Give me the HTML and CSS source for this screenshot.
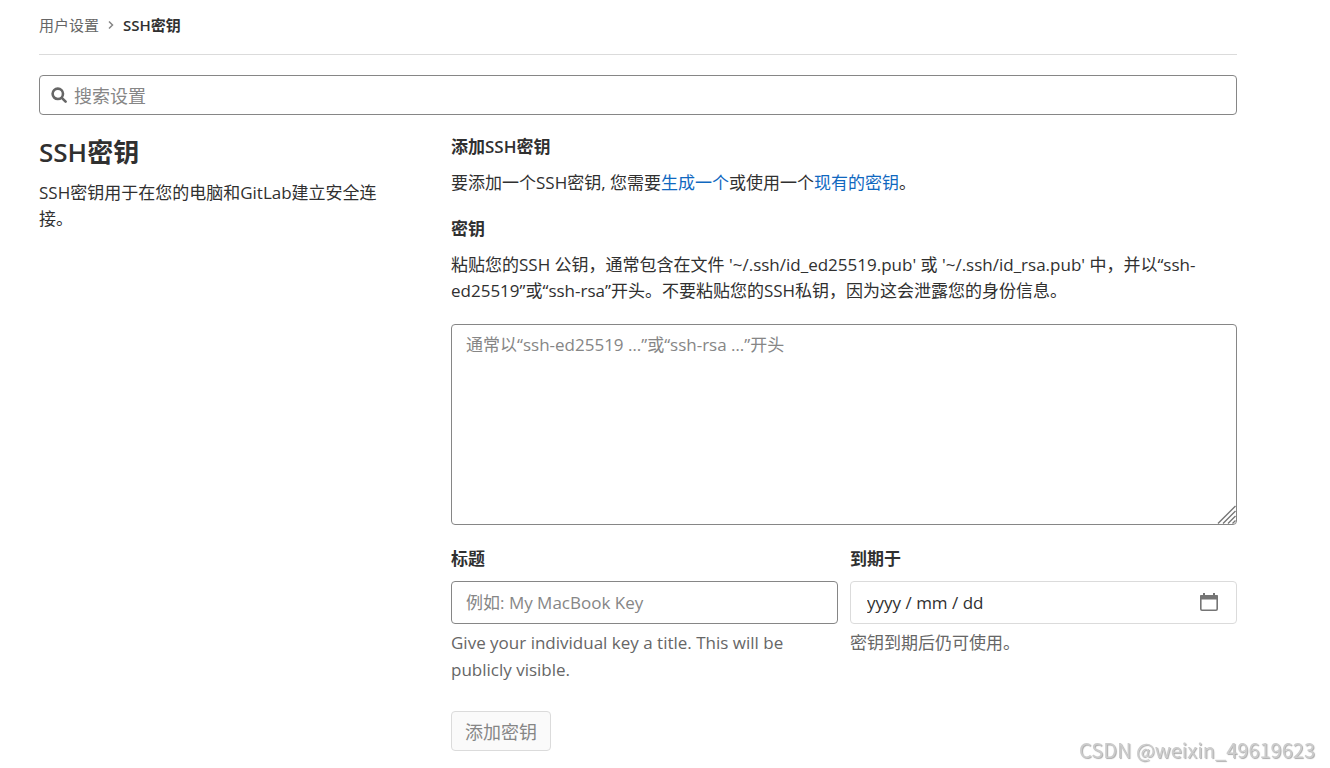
FILE: index.html
```html
<!DOCTYPE html>
<html lang="zh-CN">
<head>
    <meta charset="UTF-8">
    <meta name="viewport" content="width=device-width, initial-scale=1.0">
    <title>SSH密钥</title>
    <link rel="stylesheet" href="styles.css">
</head>
<body>
    <div class="container">
        <nav class="breadcrumbs">
            <a href="#">用户设置</a>
            <svg class="chevron" viewBox="0 0 10 10" aria-hidden="true"><path d="M3 1.5 6.5 5 3 8.5"/></svg>
            <a class="current" href="#">SSH密钥</a>
        </nav>

        <div class="search">
            <svg class="search-icon" viewBox="0 0 16 16" aria-hidden="true"><circle cx="6.8" cy="6.8" r="5.2"/><path d="M10.8 10.8 14.6 14.6"/></svg>
            <input type="search" placeholder="搜索设置" aria-label="搜索设置">
        </div>

        <main class="row">
            <section class="intro">
                <h1>SSH密钥</h1>
                <p>SSH密钥用于在您的电脑和GitLab建立安全连接。</p>
            </section>

            <section class="content">
                <h2>添加SSH密钥</h2>
                <p class="lead">要添加一个SSH密钥, 您需要<a href="#">生成一个</a>或使用一个<a href="#">现有的密钥</a>。</p>

                <form>
                    <label for="key">密钥</label>
                    <p class="key-help">粘贴您的SSH 公钥，通常包含在文件 '~/.ssh/id_ed25519.pub' 或 '~/.ssh/id_rsa.pub' 中，并以“ssh-ed25519”或“ssh-rsa”开头。不要粘贴您的SSH私钥，因为这会泄露您的身份信息。</p>
                    <textarea id="key" placeholder="通常以“ssh-ed25519 …”或“ssh-rsa …”开头"></textarea>

                    <div class="fields">
                        <div class="field">
                            <label for="title">标题</label>
                            <input class="text-input" id="title" type="text" placeholder="例如: My MacBook Key">
                            <p class="help">Give your individual key a title. This will be publicly visible.</p>
                        </div>
                        <div class="field">
                            <label for="expires">到期于</label>
                            <div class="date">
                                <input id="expires" type="text" placeholder="yyyy / mm / dd">
                                <button type="button" aria-label="日历">
                                    <svg viewBox="0 0 20 20" aria-hidden="true"><rect class="frame" x="1.8" y="2.8" width="16.4" height="14.4" rx="1.2"/><path d="M2 2h16a1 1 0 0 1 1 1v3.5H1V3a1 1 0 0 1 1-1zM4 0h2v3H4zM14 0h2v3h-2z"/></svg>
                                </button>
                            </div>
                            <p class="help">密钥到期后仍可使用。</p>
                        </div>
                    </div>

                    <button class="submit" type="submit" disabled>添加密钥</button>
                </form>
            </section>
        </main>
    </div>
    <div class="watermark">CSDN @weixin_49619623</div>
</body>
</html>
```
FILE: styles.css
```css
* {
    box-sizing: border-box;
}
body {
    margin: 0;
    font-family: "Open Sans", "Noto Sans CJK SC", sans-serif;
    font-size: 17px;
    line-height: 26px;
    color: #303030;
    background-color: #fff;
}
h1, h2, p {
    margin: 0;
}
a {
    color: #1068bf;
    text-decoration: none;
}
input, textarea, button {
    font: inherit;
    color: inherit;
}
input::placeholder, textarea::placeholder {
    color: #868686;
    opacity: 1;
}
.container {
    margin: 0 93px 0 39px;
}
.breadcrumbs {
    display: flex;
    align-items: center;
    gap: 7px;
    height: 55px;
    padding-bottom: 4px;
    border-bottom: 1px solid #dbdbdb;
    font-size: 15px;
}
.breadcrumbs a {
    color: #666;
}
.breadcrumbs .current {
    color: #303030;
    font-weight: 600;
}
.chevron {
    width: 10px;
    height: 10px;
    fill: none;
    stroke: #868686;
    stroke-width: 1.5;
}
.search {
    display: flex;
    align-items: center;
    gap: 7px;
    height: 40px;
    margin-top: 20px;
    padding: 0 11px;
    border: 1px solid #868686;
    border-radius: 4px;
    font-size: 18px;
}
.search-icon {
    width: 16px;
    height: 16px;
    fill: none;
    stroke: #666;
    stroke-width: 2.6;
    stroke-linecap: round;
}
.search input {
    flex: 1;
    border: none;
    outline: none;
    padding: 2px 0 0;
    background: none;
}

/* Two columns: description and form */
.row {
    display: grid;
    grid-template-columns: 1fr 2fr;
    gap: 19px;
    padding-top: 19px;
}
.intro {
    padding-right: 40px;
}
.intro h1 {
    margin-bottom: 10px;
    font-size: 26px;
    line-height: 36px;
    font-weight: 600;
}
h2 {
    margin-bottom: 10px;
    font-size: 17px;
    line-height: 26px;
    font-weight: 600;
}
.lead {
    margin-bottom: 20px;
}
label {
    display: block;
    font-weight: 600;
}
.key-help {
    margin: 10px 0 20px;
}
textarea {
    display: block;
    width: 100%;
    height: 201px;
    padding: 7px 14px;
    border: 1px solid #868686;
    border-radius: 4px;
    resize: vertical;
    background: url("data:image/svg+xml,%3Csvg xmlns='http://www.w3.org/2000/svg' width='19' height='19'%3E%3Cpath d='M1 18.5 18.5 1M6 18.5 18.5 6M11 18.5 18.5 11M15.5 18.5 18.5 15.5' stroke='%23777' stroke-width='1.4'/%3E%3C/svg%3E") no-repeat right bottom;
}
textarea::-webkit-resizer {
    background: transparent;
}
.fields {
    display: grid;
    grid-template-columns: 1fr 1fr;
    gap: 12px;
    margin: 21px 0 28px;
}
.text-input, .date {
    width: 100%;
    height: 43px;
    margin: 9px 0 5px;
    padding: 0 14px;
    border: 1px solid #868686;
    border-radius: 4px;
}
.text-input {
    display: block;
}
.date {
    display: flex;
    align-items: center;
    padding: 0 17px 0 16px;
    border-color: #dbdbdb;
}
.date input {
    flex: 1;
    min-width: 0;
    padding: 0;
    border: none;
    outline: none;
}
.date input::placeholder {
    color: #303030;
}
.date button {
    display: flex;
    padding: 0;
    border: none;
    background: none;
}
.date svg {
    width: 20px;
    height: 20px;
    fill: #757575;
}
.date .frame {
    fill: none;
    stroke: #757575;
    stroke-width: 1.6;
}
.help {
    color: #666;
    line-height: 27px;
}
.submit {
    height: 40px;
    padding: 2px 13px 0;
    border: 1px solid #dbdbdb;
    border-radius: 4px;
    background-color: #fafafa;
    color: #868686;
    font-size: 18px;
}
.watermark {
    position: fixed;
    right: 15px;
    bottom: 5px;
    font-family: "Noto Sans CJK SC", sans-serif;
    font-size: 20px;
    color: #ccc;
    text-shadow: 1px 1px 1px #aaa;
}
```
